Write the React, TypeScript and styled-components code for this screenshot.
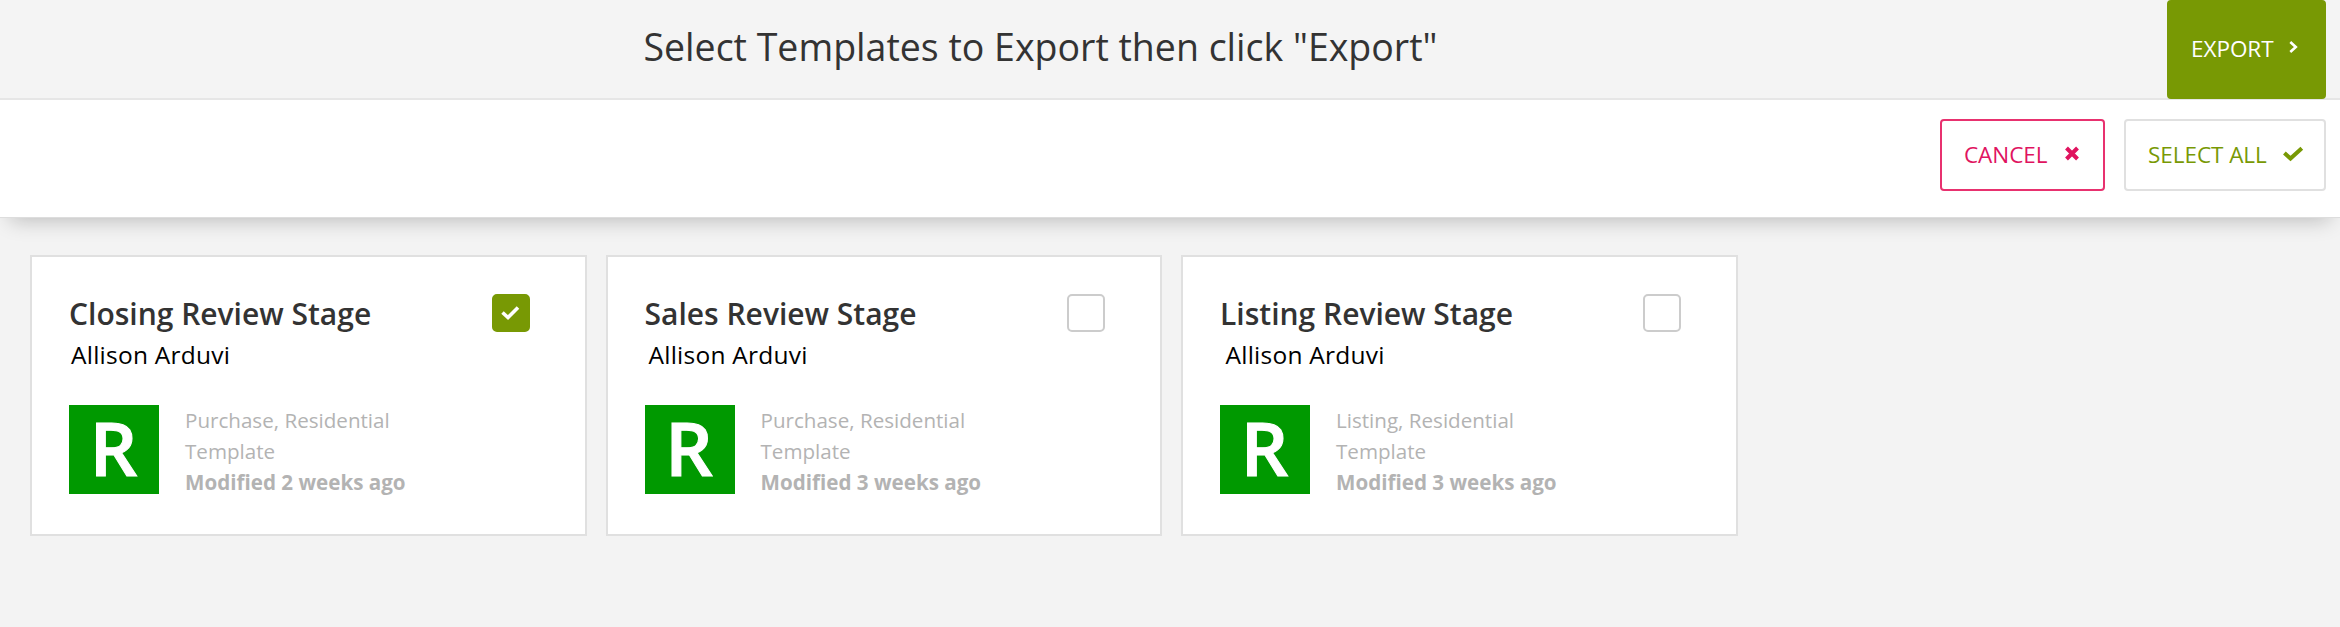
import React from "react";
import styled, { createGlobalStyle } from "styled-components";

const GlobalStyle = createGlobalStyle`
  *, *::before, *::after { box-sizing: border-box; }
  body {
    margin: 0;
    background: #f3f3f3;
    font-family: "Open Sans", "Noto Sans", sans-serif;
    color: #333;
  }
`;

const Page = styled.div`
  min-height: 627px;
  background: #f3f3f3;
`;

const Header = styled.header`
  display: grid;
  grid-template-columns: 643.5px 1fr auto;
  height: 100px;
  padding-right: 14px;
  background: #f4f4f4;
  border-bottom: 2px solid #e6e6e6;
`;

const Heading = styled.h1`
  grid-column: 2;
  margin: 0;
  font-size: 37.5px;
  font-weight: 400;
  line-height: 94px;
  white-space: nowrap;
`;

const Button = styled.button<{ $color: string; $border: string }>`
  display: flex;
  align-items: center;
  height: 72px;
  padding: 0 0 0 22px;
  border: 2px solid ${(p) => p.$border};
  border-radius: 4px;
  background: #fff;
  color: ${(p) => p.$color};
  font: 400 22.5px/30px "Open Sans", "Noto Sans", sans-serif;
  letter-spacing: -0.05px;
  white-space: nowrap;
`;

const ExportButton = styled(Button)`
  width: 159px;
  height: 99px;
  padding-bottom: 2px;
  background: #789904;
`;

const Toolbar = styled.div`
  display: flex;
  justify-content: flex-end;
  gap: 19px;
  height: 118px;
  padding: 19px 14px 0;
  background: #fff;
  border-bottom: 1px solid #ddd;
  box-shadow: 0 12px 20px -10px rgba(0, 0, 0, 0.24);
`;

const CancelButton = styled(Button)`
  width: 165px;
`;

const SelectAllButton = styled(Button)`
  width: 202px;
`;

const Icon = styled.svg<{ $gap: number }>`
  flex: none;
  margin: 0 0 3px ${(p) => p.$gap}px;
  overflow: visible;
`;

const Cards = styled.main`
  display: grid;
  grid-template-columns: repeat(3, 556.5px);
  gap: 19px;
  padding: 37px 0 0 30px;
`;

const Card = styled.article`
  height: 281px;
  padding: 37px 55px 0 37px;
  background: #fff;
  border: 2px solid #e0e0e0;
`;

const CardTop = styled.div`
  display: flex;
  justify-content: space-between;
  height: 38px;
`;

const CardTitle = styled.h2`
  height: 38px;
  margin: 0;
  overflow: hidden;
  font-size: 30px;
  font-weight: 600;
  line-height: 39px;
  white-space: nowrap;
`;

const Checkbox = styled.span<{ $checked: boolean }>`
  display: flex;
  align-items: center;
  justify-content: center;
  width: 38px;
  height: 38px;
  border: 2px solid ${(p) => (p.$checked ? "#789904" : "#ccc")};
  border-radius: 5px;
  background: ${(p) => (p.$checked ? "#789904" : "#fff")};
`;

const Owner = styled.p<{ $indent: number }>`
  margin: 6px 0 0;
  padding-left: ${(p) => p.$indent}px;
  color: #000;
  font-size: 24.5px;
  line-height: 34px;
  letter-spacing: 0.25px;
`;

const Details = styled.div`
  display: flex;
  gap: 26px;
  margin-top: 33px;
`;

const Logo = styled.div`
  display: flex;
  align-items: center;
  justify-content: center;
  width: 90px;
  height: 89px;
  padding: 0 1px 5px 0;
  background: #090;
  color: #fff;
  font: 600 75px/84px "Open Sans", sans-serif;
  -webkit-text-stroke: 1px #fff;
`;

const Meta = styled.div`
  color: #b3b3b3;
  font-size: 20.6px;
  line-height: 31px;
  white-space: nowrap;
`;

const Modified = styled.strong`
  display: block;
  font-weight: 700;
  line-height: 30px;
`;

const templates = [
  { name: "Closing Review Stage", kind: "Purchase, Residential", age: "2 weeks ago", checked: true, indent: 2 },
  { name: "Sales Review Stage", kind: "Purchase, Residential", age: "3 weeks ago", checked: false, indent: 4 },
  { name: "Listing Review Stage", kind: "Listing, Residential", age: "3 weeks ago", checked: false, indent: 5.5 },
];

export default function App() {
  return (
    <Page>
      <GlobalStyle />
      <Header>
        <Heading>Select Templates to Export then click "Export"</Heading>
        <ExportButton $color="#fff" $border="#789904">
          EXPORT
          <Icon $gap={15} width="9" height="12" viewBox="0 0 9 12">
            <path d="M1.3 1 6.8 6 1.3 11" fill="none" stroke="currentColor" strokeWidth="2.6" />
          </Icon>
        </ExportButton>
      </Header>
      <Toolbar>
        <CancelButton $color="#e0135f" $border="#e8316f">
          CANCEL
          <Icon $gap={18} width="14" height="13" viewBox="0 0 14 13">
            <path d="M1.5 1 12.5 12M12.5 1 1.5 12" fill="none" stroke="currentColor" strokeWidth="4" />
          </Icon>
        </CancelButton>
        <SelectAllButton $color="#789904" $border="#e0e0e0">
          SELECT ALL
          <Icon $gap={16} width="20" height="14" viewBox="0 0 20 14">
            <path d="M1.4 6 7.5 11.5 18.8 1.2" fill="none" stroke="currentColor" strokeWidth="4" />
          </Icon>
        </SelectAllButton>
      </Toolbar>
      <Cards>
        {templates.map((t) => (
          <Card key={t.name}>
            <CardTop>
              <CardTitle>{t.name}</CardTitle>
              <Checkbox $checked={t.checked}>
                {t.checked && (
                  <svg width="19" height="14" viewBox="0 0 19 14">
                    <path d="M1.5 6.5 7 11.5 17 1.5" fill="none" stroke="#fff" strokeWidth="3.6" />
                  </svg>
                )}
              </Checkbox>
            </CardTop>
            <Owner $indent={t.indent}>Allison Arduvi</Owner>
            <Details>
              <Logo>R</Logo>
              <Meta>
                {t.kind}
                <br />
                Template
                <Modified>Modified {t.age}</Modified>
              </Meta>
            </Details>
          </Card>
        ))}
      </Cards>
    </Page>
  );
}
